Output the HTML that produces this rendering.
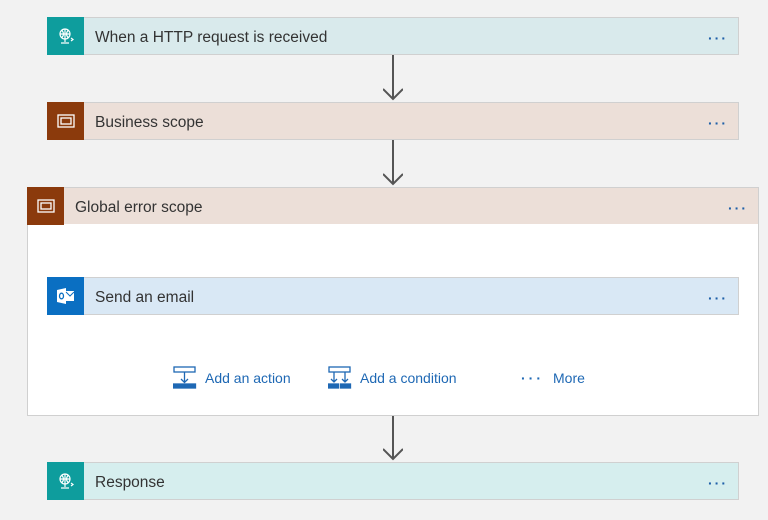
<!DOCTYPE html>
<html><head><style>
body{margin:0;width:768px;height:520px;background:#f2f2f2;font-family:"Liberation Sans",sans-serif;position:relative;overflow:hidden}
.card{position:absolute;height:36px;border:1px solid #d0d0d0;display:flex;align-items:center;font-size:15.5px;color:#333}
.ic{width:37px;height:38px;margin:-1px 0 -1px -1px;display:flex;align-items:center;justify-content:center}
.t{margin-left:11px;flex:1;padding-top:4px}
.dots{margin-right:10px;color:#1e5fa8;font-size:14px;letter-spacing:2px;font-weight:bold;padding-top:3px}
.arrow{position:absolute;left:383px;width:20px}
.box{position:absolute;left:27px;top:187px;width:730px;height:227px;background:#fff;border:1px solid #d0d0d0}
.lnk{position:absolute;top:370px;color:#1e68b4;font-size:14px}
</style></head><body>
<svg class="arrow" style="top:55px" height="46" viewBox="0 0 20 46"><path d="M10 0V44M0 34L10 44L20 34" stroke="#555" stroke-width="2" fill="none"/></svg>
<svg class="arrow" style="top:140px" height="46" viewBox="0 0 20 46"><path d="M10 0V44M0 34L10 44L20 34" stroke="#555" stroke-width="2" fill="none"/></svg>
<svg class="arrow" style="top:415px" height="46" viewBox="0 0 20 46"><path d="M10 0V44M0 34L10 44L20 34" stroke="#555" stroke-width="2" fill="none"/></svg>

<div class="card" style="left:47px;top:17px;width:690px;background:#d9eaec">
<div class="ic" style="background:#0e9d9d"><svg width="18" height="18" viewBox="0 0 18 18" fill="none" stroke="#fff" stroke-width="1.2"><circle cx="8" cy="7" r="5"/><path d="M3 7h10M8 2v10M5 3.5q3 3.5 0 7M11 3.5q-3 3.5 0 7M8 12v3M4 16h8M14 11l2 1.5-2 1.5"/></svg></div>
<div class="t">When a HTTP request is received</div><div class="dots">···</div></div>

<div class="card" style="left:47px;top:102px;width:690px;background:#ecdfd8">
<div class="ic" style="background:#8b3a0c"><svg width="18" height="14" viewBox="0 0 18 14" fill="none" stroke="#fff" stroke-width="1.3"><rect x="1" y="1" width="16" height="12"/><rect x="4" y="4" width="10" height="6"/></svg></div>
<div class="t">Business scope</div><div class="dots">···</div></div>

<div class="box"></div>
<div class="card" style="left:27px;top:187px;width:730px;background:#ecdfd8;border-bottom:none">
<div class="ic" style="background:#8b3a0c"><svg width="18" height="14" viewBox="0 0 18 14" fill="none" stroke="#fff" stroke-width="1.3"><rect x="1" y="1" width="16" height="12"/><rect x="4" y="4" width="10" height="6"/></svg></div>
<div class="t">Global error scope</div><div class="dots">···</div></div>

<div class="card" style="left:47px;top:277px;width:690px;background:#d9e8f5">
<div class="ic" style="background:#0a6fc2"><svg width="20" height="18" viewBox="0 0 20 18"><path d="M1 3L10 1V17L1 15Z" fill="#fff"/><rect x="10" y="4" width="8" height="10" fill="#fff"/><ellipse cx="5.5" cy="9" rx="2" ry="2.8" fill="none" stroke="#0a6fc2" stroke-width="1.3"/><path d="M10 5L14 9L18 5" stroke="#0a6fc2" fill="none"/></svg></div>
<div class="t">Send an email</div><div class="dots">···</div></div>

<svg style="position:absolute;left:173px;top:366px" width="24" height="23" viewBox="0 0 24 23" fill="none" stroke="#1e68b4" stroke-width="1.3"><rect x="1" y="1" width="21" height="5"/><path d="M11.5 6v10M8 13l3.5 3.5L15 13"/><rect x="0.5" y="18" width="22" height="4" fill="#1e68b4"/></svg>
<div class="lnk" style="left:205px">Add an action</div>
<svg style="position:absolute;left:328px;top:366px" width="24" height="23" viewBox="0 0 24 23" fill="none" stroke="#1e68b4" stroke-width="1.3"><rect x="1" y="1" width="21" height="5"/><path d="M6 6v10M3 13l3 3 3-3M17 6v10M14 13l3 3 3-3"/><rect x="0.5" y="18" width="10" height="4" fill="#1e68b4"/><rect x="12.5" y="18" width="10" height="4" fill="#1e68b4"/></svg>
<div class="lnk" style="left:360px">Add a condition</div>
<div class="lnk" style="left:521px;font-weight:bold;letter-spacing:3px">···</div>
<div class="lnk" style="left:553px">More</div>

<div class="card" style="left:47px;top:462px;width:690px;background:#d6eeee">
<div class="ic" style="background:#0e9d9d"><svg width="18" height="18" viewBox="0 0 18 18" fill="none" stroke="#fff" stroke-width="1.2"><circle cx="8" cy="7" r="5"/><path d="M3 7h10M8 2v10M5 3.5q3 3.5 0 7M11 3.5q-3 3.5 0 7M8 12v3M4 16h8M14 11l2 1.5-2 1.5"/></svg></div>
<div class="t">Response</div><div class="dots">···</div></div>
</body></html>
